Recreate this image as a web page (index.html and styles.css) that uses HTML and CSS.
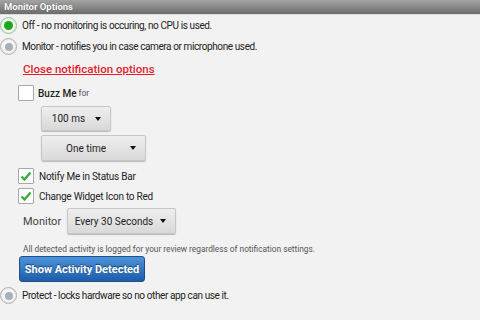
FILE: index.html
```html
<!DOCTYPE html>
<html>
<head>
  <title>Monitor Options</title>
  <link rel="stylesheet" href="styles.css">
</head>
<body>
  <div class="title">Monitor Options</div>

  <div class="opt">
    <span class="radio on"><i></i></span>
    <span>Off - no monitoring is occuring, no CPU is used.</span>
  </div>
  <div class="opt">
    <span class="radio"><i></i></span>
    <span>Monitor - notifies you in case camera or microphone used.</span>
  </div>

  <div class="sub">
    <a class="close" href="javascript:;">Close notification options</a>

    <div class="check buzz">
      <span class="box"></span>
      <span class="strong">Buzz Me</span> <span class="for">for</span>
    </div>
    <div class="spin s1"><span>100 ms</span><b></b></div>
    <div class="spin s2"><span>One time</span><b></b></div>

    <div class="check notify">
      <span class="box">
        <svg width="14" height="14" viewBox="0 0 14 14"><polyline points="2.5,7.5 5.5,10.5 11.5,3.5" fill="none" stroke="#3cab3c" stroke-width="2.4"/></svg>
      </span>
      <span>Notify Me in Status Bar</span>
    </div>
    <div class="check">
      <span class="box">
        <svg width="14" height="14" viewBox="0 0 14 14"><polyline points="2.5,7.5 5.5,10.5 11.5,3.5" fill="none" stroke="#3cab3c" stroke-width="2.4"/></svg>
      </span>
      <span>Change Widget Icon to Red</span>
    </div>

    <div class="monitor">
      <span class="lbl">Monitor</span>
      <div class="spin s3"><span>Every 30 Seconds</span><b></b></div>
    </div>

    <div class="info">All detected activity is logged for your review regardless of notification settings.</div>
    <a class="btn" href="javascript:;">Show Activity Detected</a>
  </div>

  <div class="opt last">
    <span class="radio"><i></i></span>
    <span>Protect - locks hardware so no other app can use it.</span>
  </div>
</body>
</html>
```

FILE: styles.css
```css
body{
  margin:0;
  background:#f2f2f2;
  font-family:Roboto,"Open Sans",sans-serif;
  font-size:10px;
  color:#222;
}
.title{
  height:14px;
  line-height:14px;
  padding-left:4px;
  background:linear-gradient(#a4a4a4,#6c6c6c);
  border-bottom:1px solid #dcdcdc;
  color:#fff;
  font-weight:bold;
  font-size:9.5px;
  text-shadow:0 0 1px #444;
}
.opt{
  height:21px;
  display:flex;
  align-items:center;
  gap:5px;
  letter-spacing:-0.4px;
}
.radio{
  width:15px;
  height:15px;
  border:1px solid #b0b0b0;
  border-radius:50%;
  background:radial-gradient(#ffffff,#ececec);
  display:flex;
  align-items:center;
  justify-content:center;
  box-shadow:inset 0 0 1px #ccc;
}
.radio i{
  width:8px;
  height:8px;
  border-radius:50%;
  background:#a6b0ba;
}
.radio.on{
  border-color:#8cc88c;
}
.radio.on i{
  width:9px;
  height:9px;
  background:#1aa81a;
}
.sub{
  padding-left:18px;
}
.close{
  display:block;
  margin-top:3px;
  margin-left:5px;
  height:18px;
  line-height:18px;
  color:#e41e2b;
  font-size:11.5px;
  font-weight:500;
}
.check{
  height:20px;
  display:flex;
  align-items:center;
  gap:5px;
  letter-spacing:-0.25px;
}
.check.buzz{
  margin-top:5px;
  gap:4px;
  letter-spacing:0;
}
.check.notify{
  margin-top:5px;
}
.box{
  width:14px;
  height:14px;
  border:1px solid #a8a8a8;
  border-radius:1px;
  background:#fff;
}
.box svg{
  display:block;
}
.strong{
  font-weight:500;
}
.for{
  font-size:8.5px;
  color:#555;
  margin-left:-2px;
}
.spin{
  display:flex;
  align-items:center;
  box-sizing:border-box;
  border:1px solid #c6c6c6;
  border-radius:2px;
  background:linear-gradient(#eeeeee,#d9d9d9);
  box-shadow:0 1px 1px #bbb;
}
.spin span{
  flex:1;
  text-align:center;
}
.spin b{
  width:0;
  height:0;
  margin-right:9px;
  border-left:3.5px solid transparent;
  border-right:3.5px solid transparent;
  border-top:4px solid #111;
}
.s1{
  width:70px;
  height:25px;
  margin-top:3px;
  margin-left:23px;
}
.s2{
  width:105px;
  height:26px;
  margin-top:4px;
  margin-left:23px;
}
.monitor{
  display:flex;
  align-items:center;
  margin-top:2px;
  padding-left:5px;
}
.lbl{
  width:44px;
  font-size:11px;
  color:#444;
}
.s3{
  width:109px;
  height:26px;
}
.info{
  margin-top:9px;
  margin-left:5px;
  height:12px;
  line-height:12px;
  font-size:8.3px;
  color:#555;
}
.btn{
  display:inline-block;
  margin-top:1px;
  margin-left:1px;
  width:126px;
  height:26px;
  line-height:26px;
  box-sizing:border-box;
  text-align:center;
  border:1px solid #1b4f8e;
  border-radius:3px;
  background:linear-gradient(#4d93da,#1d5ca9);
  color:#fff;
  font-weight:bold;
  font-size:11px;
  text-decoration:none;
  text-shadow:0 -1px 1px #16406f;
  white-space:nowrap;
}
.opt.last{
  margin-top:3px;
}
```
